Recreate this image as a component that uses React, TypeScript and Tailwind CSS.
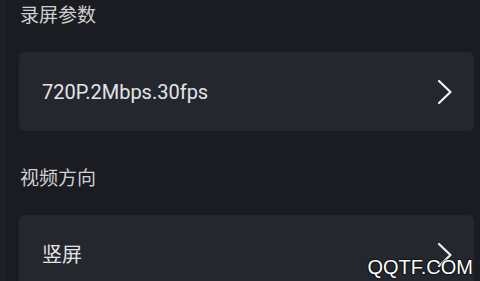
import React from "react";

const Chevron = () => (
  <svg width="16" height="26" viewBox="0 0 16 26" fill="none" className="shrink-0">
    <path d="M2 2 L13.5 13 L2 24" stroke="#f2f2f2" strokeWidth="2.2" strokeLinecap="round" strokeLinejoin="round" />
  </svg>
);

const Row = ({ label }: { label: string }) => (
  <div className="flex h-[79px] items-center justify-between rounded-[6px] bg-[#25272e] pl-[23px] pr-[21px]">
    <span className="text-[20px] leading-none text-[#e4e4e6]">{label}</span>
    <Chevron />
  </div>
);

export default function App() {
  return (
    <div
      className="relative h-[281px] w-[480px] overflow-hidden bg-[#1b1c21]"
      style={{ fontFamily: 'Roboto, "Noto Sans CJK SC", sans-serif' }}
    >
      <div className="absolute left-0 top-0 h-full w-[6px] bg-[#1f2025]" />
      <div className="flex flex-col pl-[19px] pr-[6px] pt-[3px]">
        <div className="h-[26px] pl-[1px] text-[19px] leading-[26px] text-[#cfd0d3]">录屏参数</div>
        <div className="mt-[23px]">
          <Row label="720P.2Mbps.30fps" />
        </div>
        <div className="mt-[35px] h-[26px] pl-[1px] text-[19px] leading-[26px] text-[#cfd0d3]">视频方向</div>
        <div className="mt-[23px]">
          <Row label="竖屏" />
        </div>
      </div>
      <div
        className="absolute right-[7px] top-[256px] text-[20px] leading-[22px] text-white"
        style={{ fontFamily: '"Liberation Sans", Arial, sans-serif', textShadow: "0 0 2px #000, 0 0 1px #000, 0 0 1px #000" }}
      >
        QQTF.COM
      </div>
    </div>
  );
}
